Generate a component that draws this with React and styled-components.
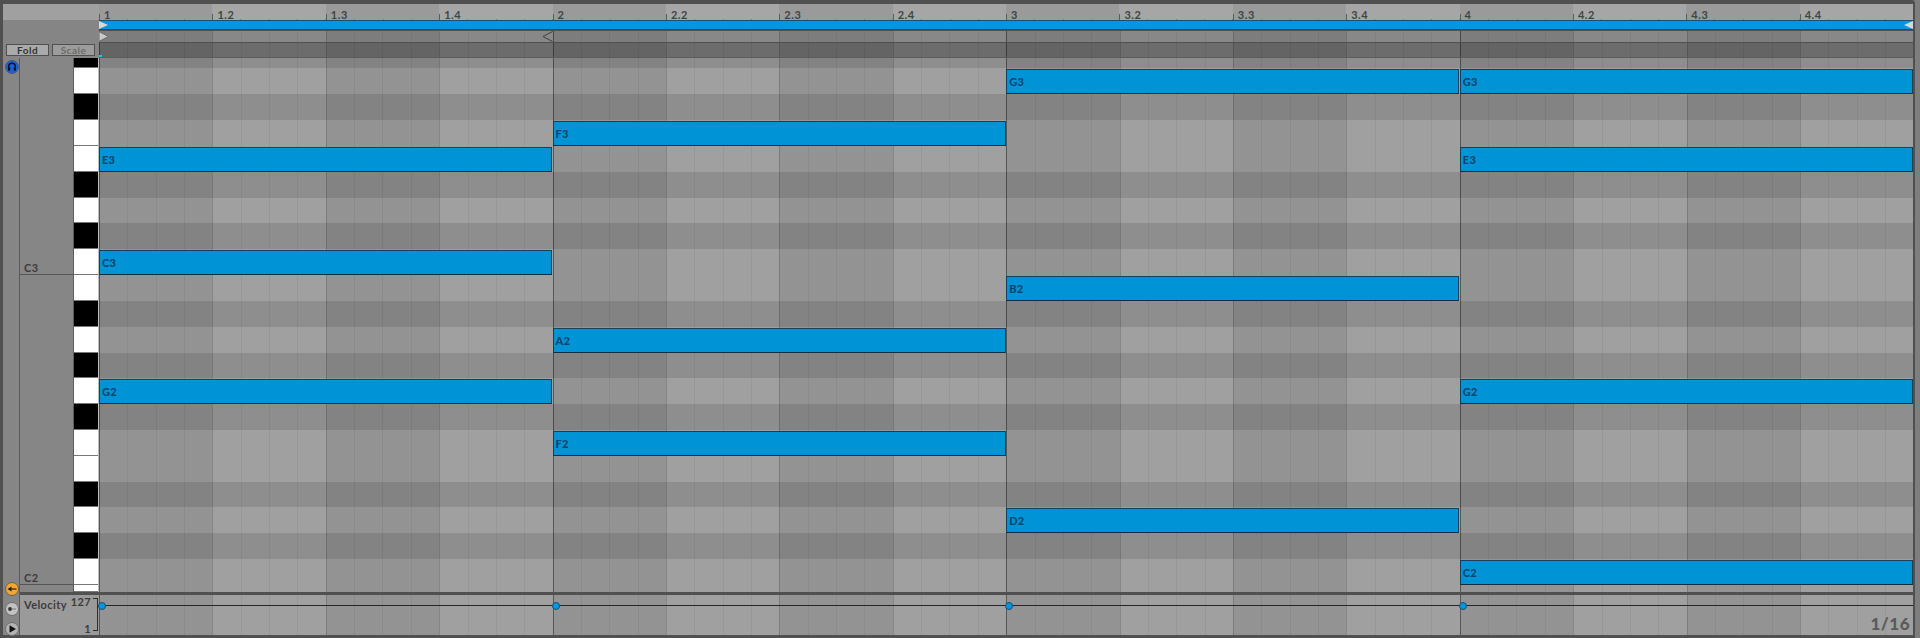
import React from 'react'
import styled, { createGlobalStyle, css } from 'styled-components'

const ROW = 25.84
const BAR = 453.6
const BEAT = BAR / 4
const SIXTEENTH = BAR / 16

const GlobalStyle = createGlobalStyle`
  html, body { margin: 0; padding: 0; background: #7e7e7e; overflow: hidden; }
  * { box-sizing: border-box; }
`

// vertical grid lines and the darker beats, shared by every timeline strip
const barLines = css`
  background-image:
    repeating-linear-gradient(90deg, rgba(0,0,0,.3) 0 1px, transparent 1px ${BAR}px),
    repeating-linear-gradient(90deg, rgba(0,0,0,.11) 0 1px, transparent 1px ${BEAT}px),
    repeating-linear-gradient(90deg, rgba(0,0,0,.06) 0 1px, transparent 1px ${SIXTEENTH}px),
    repeating-linear-gradient(90deg, rgba(0,0,0,.08) 0 ${BEAT}px, transparent ${BEAT}px ${BEAT * 2}px);
`

const Window = styled.div`
  width: 1920px;
  height: 638px;
  padding-right: 5px;
  font-family: "Lato", "Liberation Sans", sans-serif;
`
const Frame = styled.div`
  height: 638px;
  background: #505050;
  padding: 4px 2px 3px 3px;
  border-top-right-radius: 3px;
  display: flex;
  flex-direction: column;
`
const Header = styled.div`
  display: flex;
  height: 54px;
`
const SideHeader = styled.div`
  width: 96px;
  display: flex;
  flex-direction: column;
  background: #858585;
`
const SideRuler = styled.div`
  height: 16px;
  background: #a0a0a0;
`
const SideButtons = styled.div`
  margin-top: auto;
  height: 16px;
  display: flex;
  gap: 3px;
  padding: 2px 0 2px 3px;
`
const SmallButton = styled.div`
  width: 43px;
  height: 12px;
  border: 1px solid #505050;
  background: ${p => (p.$dim ? '#9c9c9c' : '#aaaaaa')};
  color: ${p => (p.$dim ? '#6c6c6c' : '#333')};
  font-size: 10px;
  font-weight: 700;
  letter-spacing: .5px;
  line-height: 10px;
  text-align: center;
`
const Timeline = styled.div`
  width: 1814px;
  display: flex;
  flex-direction: column;
`
const Ruler = styled.div`
  height: 16px;
  display: flex;
`
const RulerCell = styled.div`
  width: ${BEAT}px;
  padding: 6px 0 0 5px;
  font-size: 11px;
  font-weight: 700;
  letter-spacing: .6px;
  line-height: 10px;
  color: #434343;
  background-color: ${p => (p.$dark ? '#9a9a9a' : '#a6a6a6')};
  background-image:
    linear-gradient(#5c5c5c, #5c5c5c),
    repeating-linear-gradient(90deg, #7d7d7d 0 1px, transparent 1px ${SIXTEENTH}px);
  background-size: 1px 6px, 100% 1px;
  background-position: 0 100%, 0 100%;
  background-repeat: no-repeat;
`
const LoopBar = styled.div`
  height: 11px;
  padding-bottom: 1px;
  background: #505050;
`
const LoopFill = styled.div`
  height: 10px;
  background: #0098e4;
  border-top: 1px solid #1a4f70;
  border-bottom: 1px solid #1a4f70;
  display: flex;
  justify-content: space-between;
  align-items: center;
`
const MarkerRow = styled.div`
  height: 11px;
  background-color: #888888;
  ${barLines}
`
const MarkerSpan = styled.div`
  width: ${BAR}px;
  height: 11px;
  display: flex;
  justify-content: space-between;
`
const Strip = styled.div`
  height: 16px;
  display: flex;
  align-items: flex-end;
  background-color: #6c6c6c;
  border-top: 1px solid #505050;
  border-bottom: 1px solid #5c5c5c;
  ${barLines}
`
const CueMark = styled.div`
  width: 3px;
  height: 2px;
  background: #1cc8e8;
`
const Body = styled.div`
  flex: 1;
  display: flex;
  min-height: 0;
`
const IconRail = styled.div`
  width: 17px;
  display: flex;
  flex-direction: column;
  align-items: center;
  padding: 2px 0 1px 1px;
  background: #868686;
  border-right: 1px solid #5a5a5a;
`
const RailIcon = styled.svg`
  width: 14px;
  height: 14px;
  flex: none;
  margin-top: ${p => p.$gap || 0}px;
`
const Editor = styled.div`
  width: 1893px;
  display: flex;
  flex-direction: column;
`
const RollRow = styled.div`
  height: 534px;
  display: flex;
`
const LabelColumn = styled.div`
  width: 53px;
  display: flex;
  flex-direction: column;
  background: #868686;
`
const LabelCell = styled.div`
  height: ${p => p.$h}px;
  padding-left: 4px;
  display: flex;
  align-items: flex-end;
  font-size: 11px;
  font-weight: 700;
  letter-spacing: .4px;
  line-height: 13px;
  color: #3c3c3c;
  ${p => p.$line && 'border-bottom: 1px solid #555;'}
`
const KeyColumn = styled.div`
  width: 26px;
  display: flex;
  flex-direction: column;
  background: #6a6a6a;
  border-left: 1px solid #5e5e5e;
  border-right: 1px solid #bdbdbd;
`
const PianoKey = styled.div`
  height: ${p => p.$h}px;
  background: ${p => (p.$black ? '#000' : '#fff')};
  border-bottom: 1px solid #777;
`
const Roll = styled.div`
  width: 1814px;
  height: 534px;
  display: grid;
  grid-template-columns: repeat(4, ${BAR}px);
  grid-template-rows: 10.4px repeat(20, ${ROW}px) 6.8px;
`
const Lane = styled.div`
  grid-column: 1 / -1;
  grid-row: ${p => p.$row};
  background: ${p => (p.$black ? '#8e8e8e' : '#a0a0a0')};
`
const RollLines = styled.div`
  grid-column: 1 / -1;
  grid-row: 1 / -1;
  ${barLines}
`
const Note = styled.div`
  grid-column: ${p => p.$bar};
  grid-row: ${p => p.$row};
  margin: 1px .5px 0 0;
  padding-left: 2px;
  display: flex;
  align-items: center;
  background: #0094d7;
  border: 1px solid #14405a;
  border-bottom-color: #0e2f42;
  color: #06466c;
  font-size: 11px;
  font-weight: 900;
  letter-spacing: .3px;
`
const Separator = styled.div`
  height: 4px;
  background: #505050;
`
const VelocityRow = styled.div`
  flex: 1;
  display: flex;
`
const VelocitySide = styled.div`
  width: 79px;
  padding: 3px 0 0 4px;
  display: flex;
  justify-content: space-between;
  background: #9a9a9a;
  font-size: 11px;
  font-weight: 700;
  letter-spacing: .4px;
  line-height: 13px;
  color: #3c3c3c;
`
const RangeScale = styled.div`
  width: 24px;
  height: 40px;
  margin-top: -3px;
  padding-right: 8px;
  display: flex;
  flex-direction: column;
  justify-content: space-between;
  align-items: flex-end;
  position: relative;
`
const RangeBracket = styled.div`
  position: absolute;
  right: 1px;
  top: 3px;
  bottom: 4px;
  width: 5px;
  border: 1px solid #2c2c2c;
  border-left: none;
`
const VelocityLane = styled.div`
  width: 1814px;
  position: relative;
  display: grid;
  grid-template-columns: repeat(4, ${BAR}px);
  align-items: start;
  background-color: #a0a0a0;
  ${barLines}
`
const Stem = styled.div`
  height: 1px;
  margin-top: 10px;
  background: #262626;
  display: flex;
  align-items: center;
`
const StemDot = styled.div`
  width: 8px;
  height: 8px;
  flex: none;
  margin-left: -1px;
  border-radius: 50%;
  background: #0098e4;
  border: 1px solid #1a4f70;
`
const Grid16 = styled.div`
  position: absolute;
  right: 3px;
  bottom: 3px;
  font-size: 17px;
  font-weight: 900;
  letter-spacing: .5px;
  line-height: 17px;
  color: #5a5a5a;
`

const BLACK = [1, 4, 6, 9, 11, 13, 16, 18]
const LANES = [
  { k: -1, h: 10.4, black: true },
  ...Array.from({ length: 20 }, (_, k) => ({ k, h: ROW, black: BLACK.includes(k) })),
  { k: 20, h: 6.8, black: false },
]

const NOTES = [
  ['E3', 3, 1], ['C3', 7, 1], ['G2', 12, 1],
  ['F3', 2, 2], ['A2', 10, 2], ['F2', 14, 2],
  ['G3', 0, 3], ['B2', 8, 3], ['D2', 17, 3],
  ['G3', 0, 4], ['E3', 3, 4], ['G2', 12, 4], ['C2', 19, 4],
]

const BEATS = [1, 2, 3, 4].flatMap(b => [`${b}`, `${b}.2`, `${b}.3`, `${b}.4`])

function Triangle({ flip }) {
  return (
    <svg width="11" height="11" viewBox="0 0 11 11" style={{ flex: 'none' }}>
      {flip
        ? <path d="M10.5 .5 L1 5.5 L10.5 10.5" fill="#8a8a8a" stroke="#404040" />
        : <path d="M0 .5 L9.5 5.5 L0 10.5 Z" fill="#c8c8c8" stroke="#6a6a6a" />}
    </svg>
  )
}

function SmallTriangle({ flip }) {
  return (
    <svg width="9" height="8" viewBox="0 0 9 8" style={{ flex: 'none' }}>
      <path d={flip ? 'M9 0 L0 4 L9 8 Z' : 'M0 0 L9 4 L0 8 Z'} fill="#d8d8d8" />
    </svg>
  )
}

function App() {
  return (
    <Window>
      <GlobalStyle />
      <Frame>
        <Header>
          <SideHeader>
            <SideRuler />
            <SideButtons>
              <SmallButton>Fold</SmallButton>
              <SmallButton $dim>Scale</SmallButton>
            </SideButtons>
          </SideHeader>
          <Timeline>
            <Ruler>
              {BEATS.map((b, i) => <RulerCell key={b} $dark={i % 2 === 0}>{b}</RulerCell>)}
            </Ruler>
            <LoopBar>
              <LoopFill>
                <SmallTriangle />
                <SmallTriangle flip />
              </LoopFill>
            </LoopBar>
            <MarkerRow>
              <MarkerSpan>
                <Triangle />
                <Triangle flip />
              </MarkerSpan>
            </MarkerRow>
            <Strip><CueMark /></Strip>
          </Timeline>
        </Header>
        <Body>
          <IconRail>
            <RailIcon viewBox="0 0 14 14">
              <circle cx="7" cy="7" r="6.5" fill="#1a62d4" stroke="#4a5a78" />
              <path d="M3.7 9 V6.6 a3.3 3.3 0 0 1 6.6 0 V9" fill="none" stroke="#06122c" strokeWidth="1.5" />
              <rect x="3" y="7.4" width="2.2" height="3.2" fill="#06122c" />
              <rect x="8.8" y="7.4" width="2.2" height="3.2" fill="#06122c" />
            </RailIcon>
            <RailIcon viewBox="0 0 14 14" $gap={508}>
              <circle cx="7" cy="7" r="6.5" fill="#f4a532" stroke="#6e6248" />
              <path d="M6 7 H11.5" stroke="#2a2010" strokeWidth="1.2" />
              <path d="M2.5 7 L6.5 4.6 V9.4 Z" fill="#2a2010" />
            </RailIcon>
            <RailIcon viewBox="0 0 14 14" $gap={6}>
              <circle cx="7" cy="7" r="6.5" fill="#c2c2c2" stroke="#6e6e6e" />
              <circle cx="5" cy="7" r="1.9" fill="#333" />
              <path d="M7.5 7 H11.5" stroke="#333" strokeDasharray="1 1" />
            </RailIcon>
            <RailIcon viewBox="0 0 14 14" $gap={6}>
              <circle cx="7" cy="7" r="6.5" fill="#b4b4b4" stroke="#6e6e6e" />
              <path d="M4.5 3.2 L11 7 L4.5 10.8 Z" fill="#111" />
            </RailIcon>
          </IconRail>
          <Editor>
            <RollRow>
              <LabelColumn>
                {LANES.map(l => (
                  <LabelCell key={l.k} $h={l.h} $line={l.k === 7 || l.k === 19}>
                    {l.k === 7 && 'C3'}
                    {l.k === 19 && 'C2'}
                  </LabelCell>
                ))}
              </LabelColumn>
              <KeyColumn>
                {LANES.map(l => <PianoKey key={l.k} $h={l.h} $black={l.black} />)}
              </KeyColumn>
              <Roll>
                {LANES.map((l, i) => <Lane key={l.k} $row={i + 1} $black={l.black} />)}
                <RollLines />
                {NOTES.map(([name, k, bar]) => (
                  <Note key={`${name}-${bar}`} $row={k + 2} $bar={bar}>{name}</Note>
                ))}
              </Roll>
            </RollRow>
            <Separator />
            <VelocityRow>
              <VelocitySide>
                <span>Velocity</span>
                <RangeScale>
                  <span>127</span>
                  <span>1</span>
                  <RangeBracket />
                </RangeScale>
              </VelocitySide>
              <VelocityLane>
                {[0, 1, 2, 3].map(b => <Stem key={b}><StemDot /></Stem>)}
                <Grid16>1/16</Grid16>
              </VelocityLane>
            </VelocityRow>
          </Editor>
        </Body>
      </Frame>
    </Window>
  )
}

export default App
